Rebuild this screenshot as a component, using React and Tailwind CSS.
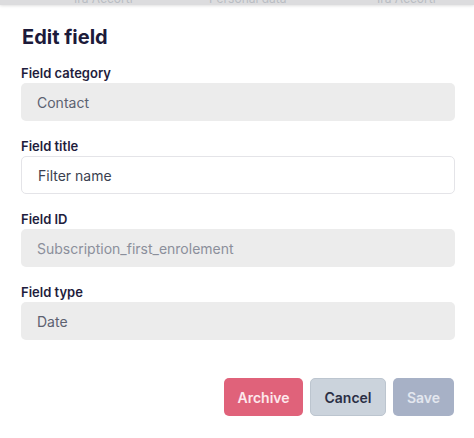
import React from 'react';

const Field = ({ label, value, tone = 'filled', textClass = 'text-[#5c6170]' }) => (
  <div className="flex flex-col">
    <label className="text-[13px] leading-4 font-semibold text-[#1f1d3d] mb-[2px]">{label}</label>
    <div
      className={`h-[38px] rounded-[5px] flex items-center pl-4 text-[14px] ${textClass} ${
        tone === 'filled' ? 'bg-[#ececec]' : 'bg-white border border-[#e4e4e8]'
      }`}
    >
      {value}
    </div>
  </div>
);

export default function App() {
  return (
    <div className="w-[474px] h-[438px] bg-white overflow-hidden" style={{ fontFamily: 'Inter, "Liberation Sans", sans-serif' }}>
      {/* backdrop strip behind the modal, page text barely peeking out */}
      <div className="h-[5px] bg-[#dcdcde] relative overflow-hidden shadow-[0_1px_3px_rgba(0,0,0,0.12)]">
        <span className="absolute left-[74px] top-[-10px] text-[12px] text-[#b9bcc3]">Ira Accorti</span>
        <span className="absolute left-[209px] top-[-10px] text-[12px] text-[#b9bcc3]">Personal data</span>
        <span className="absolute left-[377px] top-[-10px] text-[12px] text-[#b9bcc3]">Ira Accorti</span>
      </div>

      <div className="pl-[21px] pr-[19px]">
        {/* Header */}
        <h2 className="mt-[18px] ml-[1px] text-[20px] leading-7 font-bold text-[#1c1a3a]">Edit field</h2>

        {/* Fields */}
        <div className="mt-[14px] flex flex-col gap-[17px]">
          <Field label="Field category" value="Contact" />
          <Field label="Field title" value="Filter name" tone="outline" textClass="text-[#3b3f50]" />
          <Field label="Field ID" value="Subscription_first_enrolement" textClass="text-[#8b8f9b]" />
          <Field label="Field type" value="Date" />
        </div>

        {/* Actions */}
        <div className="mt-[38px] flex justify-end gap-[7px] pr-[1px]">
          <button className="w-[79px] h-[38px] rounded-[5px] bg-[#e0627a] text-[14px] font-semibold text-[#fde8ec]">
            Archive
          </button>
          <button className="w-[76px] h-[38px] rounded-[5px] bg-[#cbd3dc] border border-[#bcc5cf] text-[14px] font-semibold text-[#2a2f45]">
            Cancel
          </button>
          <button className="w-[61px] h-[38px] rounded-[5px] bg-[#a7b1c6] text-[14px] font-semibold text-[#e3e7ef]">
            Save
          </button>
        </div>
      </div>
    </div>
  );
}
